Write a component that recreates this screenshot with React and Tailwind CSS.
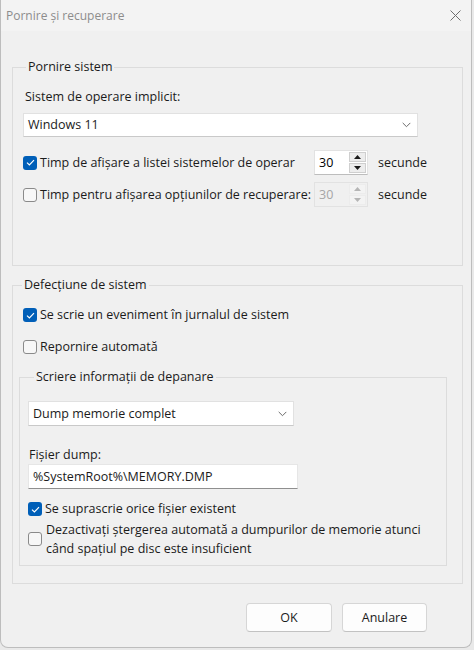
import React from "react";

function CheckBox({ checked }) {
  if (checked) {
    return (
      <span className="flex h-[14px] w-[14px] shrink-0 items-center justify-center rounded-[3px] bg-[#005fb8]">
        <svg width="9" height="7" viewBox="0 0 9 7">
          <path d="M1 3.6 L3.4 6 L8 1.2" fill="none" stroke="#fff" strokeWidth="1.2" />
        </svg>
      </span>
    );
  }
  return <span className="h-[14px] w-[14px] shrink-0 rounded-[3px] border border-[#8a8a8a] bg-[#f7f7f7]" />;
}

function Chevron() {
  return (
    <svg width="9" height="6" viewBox="0 0 9 6">
      <path d="M0.7 0.9 L4.5 4.7 L8.3 0.9" fill="none" stroke="#6b6b6b" strokeWidth="1" />
    </svg>
  );
}

function Arrow({ up, color }) {
  return (
    <svg width="7" height="4" viewBox="0 0 7 4">
      <path d={up ? "M0 4 L3.5 0 L7 4 Z" : "M0 0 L3.5 4 L7 0 Z"} fill={color} />
    </svg>
  );
}

function Spin({ disabled }) {
  const arrow = disabled ? "#b5b5b5" : "#1a1a1a";
  return (
    <div
      className={
        "flex h-[25px] w-[54px] shrink-0 border " +
        (disabled ? "border-[#e2e2e2] bg-[#f0f0f0] text-[#a6a6a6]" : "border-[#e2e2e2] border-b-[#bdbdbd] bg-white text-black")
      }
    >
      <div className="flex flex-1 items-center pl-[4px]">30</div>
      <div className="flex w-[19px] flex-col gap-[1px] p-[1px]">
        <div className={"flex flex-1 items-center justify-center border " + (disabled ? "border-[#ececec] bg-[#f3f3f3]" : "border-[#cfcfcf] bg-[#ededed]")}>
          <Arrow up color={arrow} />
        </div>
        <div className={"flex flex-1 items-center justify-center border " + (disabled ? "border-[#ececec] bg-[#f3f3f3]" : "border-[#cfcfcf] bg-[#ededed]")}>
          <Arrow color={arrow} />
        </div>
      </div>
    </div>
  );
}

export default function App() {
  return (
    <div
      className="h-[650px] w-[474px] bg-[#e9e9e9] text-[12.5px] leading-[16px] text-[#1b1b1b]"
      style={{ fontFamily: "'Open Sans', 'Noto Sans', sans-serif" }}
    >
      <div className="flex h-[648px] w-[472px] flex-col rounded-b-[8px] border-x border-b border-[#bdbdbd] bg-[#f0f0f0]">
        {/* Title bar */}
        <div className="flex h-[31px] shrink-0 items-center justify-between bg-[#f3f3f3] pl-[5px] pr-[10px]">
          <span className="text-[12px] text-[#8c8c8c]">Pornire și recuperare</span>
          <svg width="11" height="11" viewBox="0 0 11 11">
            <path d="M0.5 0.5 L10.5 10.5 M10.5 0.5 L0.5 10.5" stroke="#6e6e6e" strokeWidth="1" />
          </svg>
        </div>

        {/* Pornire sistem */}
        <fieldset className="ml-[11px] mt-[28px] h-[207px] w-[451px] border border-[#dcdcdc] pl-[10px]">
          <legend className="ml-[3px] px-[2px]">Pornire sistem</legend>
          <div className="mt-[14px] pl-[2px]">Sistem de operare implicit:</div>
          <div className="mt-[8px] flex h-[24px] w-[395px] items-center justify-between border border-[#e1e1e1] border-b-[#c9c9c9] bg-white pl-[4px] pr-[6px]">
            <span>Windows 11</span>
            <Chevron />
          </div>
          <div className="mt-[13px] flex items-center">
            <div className="flex w-[291px] items-center gap-[3px] whitespace-nowrap">
              <CheckBox checked />
              <span>Timp de afișare a listei sistemelor de operar</span>
            </div>
            <Spin />
            <span className="ml-[10px]">secunde</span>
          </div>
          <div className="mt-[7px] flex items-center">
            <div className="flex w-[291px] items-center gap-[3px] whitespace-nowrap">
              <CheckBox />
              <span>Timp pentru afișarea opțiunilor de recuperare:</span>
            </div>
            <Spin disabled />
            <span className="ml-[10px]">secunde</span>
          </div>
        </fieldset>

        {/* Defectiune de sistem */}
        <fieldset className="ml-[11px] mt-[11px] h-[307px] w-[451px] border border-[#dcdcdc] pl-[6px]">
          <legend className="ml-[3px] px-[2px]">Defecțiune de sistem</legend>
          <div className="mt-[14px] flex items-center gap-[3px] whitespace-nowrap pl-[4px]">
            <CheckBox checked />
            <span>Se scrie un eveniment în jurnalul de sistem</span>
          </div>
          <div className="mt-[16px] flex items-center gap-[3px] pl-[4px]">
            <CheckBox />
            <span>Repornire automată</span>
          </div>

          <fieldset className="mt-[14px] h-[197px] w-[428px] border border-[#dcdcdc] pl-[8px]">
            <legend className="ml-[6px] px-[2px]">Scriere informații de depanare</legend>
            <div className="mt-[16px] flex h-[25px] w-[266px] items-center justify-between border border-[#e1e1e1] border-b-[#c9c9c9] bg-white pl-[4px] pr-[6px]">
              <span>Dump memorie complet</span>
              <Chevron />
            </div>
            <div className="mt-[21px] pl-[1px]">Fișier dump:</div>
            <div className="mt-[1px] flex h-[25px] w-[270px] items-center border border-[#e6e6e6] border-b-[#8f8f8f] bg-white pl-[4px]">
              %SystemRoot%\MEMORY.DMP
            </div>
            <div className="mt-[12px] flex items-center gap-[3px]">
              <CheckBox checked />
              <span>Se suprascrie orice fișier existent</span>
            </div>
            <div className="mt-[3px] flex items-center gap-[4px]">
              <CheckBox />
              <span className="leading-[19px]">
                Dezactivați ștergerea automată a dumpurilor de memorie atunci
                <br />
                când spațiul pe disc este insuficient
              </span>
            </div>
          </fieldset>
        </fieldset>

        {/* Buttons */}
        <div className="mt-[19px] flex justify-end gap-[10px] pr-[44px]">
          <button className="h-[29px] w-[86px] rounded-[4px] border border-[#d6d6d6] border-b-[#c2c2c2] bg-[#fdfdfd] text-[12.5px]">
            OK
          </button>
          <button className="h-[29px] w-[85px] rounded-[4px] border border-[#d6d6d6] border-b-[#c2c2c2] bg-[#fdfdfd] text-[12.5px]">
            Anulare
          </button>
        </div>
      </div>
    </div>
  );
}
